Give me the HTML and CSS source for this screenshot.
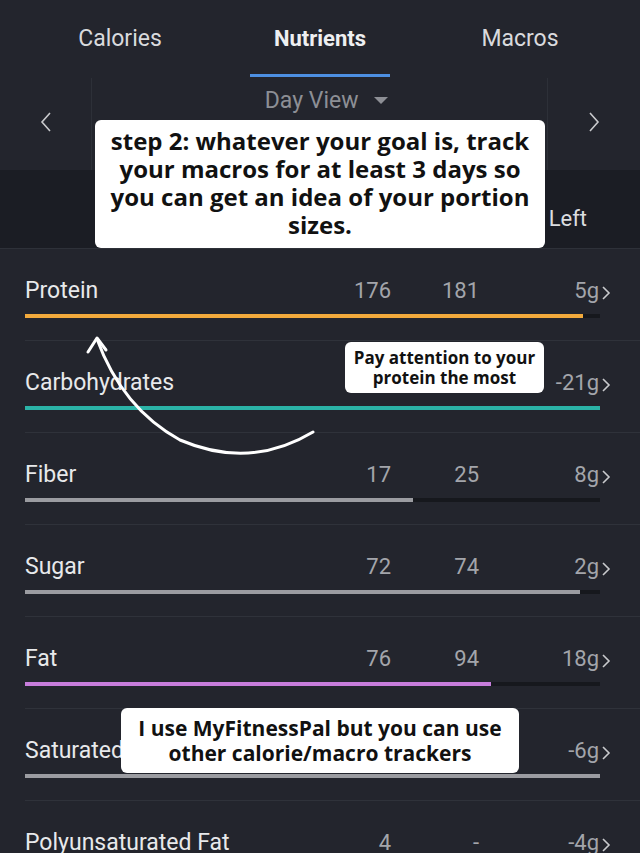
FILE: index.html
```html
<!DOCTYPE html>
<html lang="en">

<head>
    <meta charset="UTF-8">
    <meta name="viewport" content="width=device-width, initial-scale=1.0">
    <title>Nutrients</title>
    <link rel="stylesheet" href="styles.css">
</head>

<body>
    <section class="screen">
        <nav class="tabs">
            <div class="tab"><span>Calories</span></div>
            <div class="tab active"><span>Nutrients</span></div>
            <div class="tab"><span>Macros</span></div>
        </nav>

        <div class="dayview">
            <div class="nav-arrow">
                <svg width="12" height="20" viewBox="0 0 12 20"><path d="M10 1 L2 10 L10 19" /></svg>
            </div>
            <div class="day-center">
                <p class="day-title">Day View <span class="caret"></span></p>
            </div>
            <div class="nav-arrow">
                <svg width="12" height="20" viewBox="0 0 12 20"><path d="M2 1 L10 10 L2 19" /></svg>
            </div>
        </div>

        <div class="head">
            <div class="cols">
                <span></span>
                <span></span>
                <span></span>
                <span class="num left">Left</span>
                <span></span>
            </div>
        </div>

        <div class="row">
            <div class="cols">
                <span class="name">Protein</span>
                <span class="num">176</span>
                <span class="num">181</span>
                <span class="num">5g</span>
                <svg class="chev" width="10" height="16" viewBox="0 0 10 16"><path d="M2 2 L8 8 L2 14" /></svg>
            </div>
            <div class="track"><div class="fill orange" style="width: 97%"></div></div>
        </div>

        <div class="row">
            <div class="cols">
                <span class="name">Carbohydrates</span>
                <span class="num"></span>
                <span class="num"></span>
                <span class="num">-21g</span>
                <svg class="chev" width="10" height="16" viewBox="0 0 10 16"><path d="M2 2 L8 8 L2 14" /></svg>
            </div>
            <div class="track"><div class="fill teal" style="width: 100%"></div></div>
        </div>

        <div class="row">
            <div class="cols">
                <span class="name">Fiber</span>
                <span class="num">17</span>
                <span class="num">25</span>
                <span class="num">8g</span>
                <svg class="chev" width="10" height="16" viewBox="0 0 10 16"><path d="M2 2 L8 8 L2 14" /></svg>
            </div>
            <div class="track"><div class="fill grey" style="width: 67.5%"></div></div>
        </div>

        <div class="row">
            <div class="cols">
                <span class="name">Sugar</span>
                <span class="num">72</span>
                <span class="num">74</span>
                <span class="num">2g</span>
                <svg class="chev" width="10" height="16" viewBox="0 0 10 16"><path d="M2 2 L8 8 L2 14" /></svg>
            </div>
            <div class="track"><div class="fill grey" style="width: 96.5%"></div></div>
        </div>

        <div class="row">
            <div class="cols">
                <span class="name">Fat</span>
                <span class="num">76</span>
                <span class="num">94</span>
                <span class="num">18g</span>
                <svg class="chev" width="10" height="16" viewBox="0 0 10 16"><path d="M2 2 L8 8 L2 14" /></svg>
            </div>
            <div class="track"><div class="fill purple" style="width: 81%"></div></div>
        </div>

        <div class="row">
            <div class="cols">
                <span class="name">Saturated</span>
                <span class="num"></span>
                <span class="num"></span>
                <span class="num">-6g</span>
                <svg class="chev" width="10" height="16" viewBox="0 0 10 16"><path d="M2 2 L8 8 L2 14" /></svg>
            </div>
            <div class="track"><div class="fill grey" style="width: 100%"></div></div>
        </div>

        <div class="row">
            <div class="cols">
                <span class="name">Polyunsaturated Fat</span>
                <span class="num">4</span>
                <span class="num">-</span>
                <span class="num">-4g</span>
                <svg class="chev" width="10" height="16" viewBox="0 0 10 16"><path d="M2 2 L8 8 L2 14" /></svg>
            </div>
            <div class="track"><div class="fill grey" style="width: 0%"></div></div>
        </div>

        <!-- overlays -->
        <svg class="doodle" width="640" height="853" viewBox="0 0 640 853">
            <path d="M313 432 Q250 470 180 440 Q122 408 97 339" />
            <path d="M88 352 L97 338 L106 350" />
        </svg>

        <div class="caption big">step 2: whatever your goal is, track<br>your macros for at least 3 days so<br>you can get an idea of your portion<br>sizes.</div>
        <div class="caption small">Pay attention to your<br>protein the most</div>
        <div class="caption mid">I use MyFitnessPal but you can use<br>other calorie/macro trackers</div>
    </section>
</body>

</html>
```

FILE: styles.css
```css
* {
    margin: 0;
    padding: 0;
    box-sizing: border-box;
}

body {
    font-family: Roboto, "Liberation Sans", sans-serif;
    background-color: #23252d;
    color: #e6e7ea;
}

.screen {
    position: relative;
    width: 640px;
    height: 853px;
    overflow: hidden;
    background-color: #23252d;
}

/* tabs */
.tabs {
    display: grid;
    grid-template-columns: repeat(3, 1fr);
    padding: 0 20px;
    height: 78px;
}

.tab {
    display: flex;
    justify-content: center;
    align-items: flex-end;
    height: 77px;
}

.tab span {
    font-size: 23px;
    line-height: 26px;
    padding: 0 24px 22px;
    border-bottom: 3px solid transparent;
    color: #d9dadd;
}

.tab.active span {
    font-weight: 700;
    font-size: 22px;
    color: #eeeff1;
    border-bottom-color: #4d8fe2;
}

/* day view */
.dayview {
    display: grid;
    grid-template-columns: 91px 1fr 92px;
    height: 92px;
}

.nav-arrow {
    display: flex;
    justify-content: center;
    align-items: center;
    padding-bottom: 4px;
}

.nav-arrow svg path,
.chev path {
    fill: none;
    stroke: #c9cacd;
    stroke-width: 1.6;
}

.day-center {
    border-left: 1px solid #2d3038;
    border-right: 1px solid #2d3038;
    text-align: center;
    padding-top: 10px;
}

.day-title {
    font-size: 23px;
    line-height: 26px;
    color: #8d8f95;
    padding-left: 14px;
}

.caret {
    display: inline-block;
    width: 0;
    height: 0;
    margin-left: 10px;
    vertical-align: 4px;
    border-left: 7px solid transparent;
    border-right: 7px solid transparent;
    border-top: 7px solid #8d8f95;
}

/* table */
.cols {
    display: grid;
    grid-template-columns: 1fr 70px 88px 120px 12px;
    align-items: center;
    font-size: 23px;
    line-height: 24px;
}

.num {
    text-align: right;
    font-size: 22px;
    color: #a3a5ab;
}

.head {
    height: 79px;
    padding: 37px 29px 0 25px;
    background-color: #1b1d24;
    border-bottom: 1px solid #2e3139;
}

.head .num {
    color: #dcdde0;
}

.head .left {
    padding-right: 12px;
}

.row {
    height: 92px;
    margin-left: 25px;
    padding: 30px 29px 0 0;
    border-bottom: 1px solid #2f323a;
}

.name {
    color: #e8e9eb;
}

.chev {
    justify-self: end;
    margin-top: 3px;
}

.track {
    height: 4px;
    margin: 11px 11px 0 0;
    background-color: #16181d;
}

.fill {
    height: 100%;
}

.orange {
    background-color: #f2aa3c;
}

.teal {
    background-color: #2bb3a7;
}

.grey {
    background-color: #9b9ca1;
}

.purple {
    background-color: #c77ddc;
}

/* overlay captions */
.doodle {
    position: absolute;
    top: 0;
    left: 0;
    pointer-events: none;
}

.doodle path {
    fill: none;
    stroke: #ffffff;
    stroke-width: 3;
    stroke-linecap: round;
    stroke-linejoin: round;
}

.caption {
    position: absolute;
    display: flex;
    align-items: center;
    justify-content: center;
    text-align: center;
    background-color: #ffffff;
    color: #111111;
    font-family: "Open Sans", "Noto Sans", sans-serif;
    font-weight: 700;
    border-radius: 6px;
    white-space: nowrap;
}

.caption.big {
    left: 95px;
    top: 120px;
    width: 450px;
    height: 128px;
    font-size: 24px;
    line-height: 28px;
    padding-bottom: 2px;
}

.caption.small {
    left: 345px;
    top: 342px;
    width: 199px;
    height: 51px;
    font-size: 17px;
    line-height: 20px;
}

.caption.mid {
    left: 121px;
    top: 708px;
    width: 398px;
    height: 65px;
    font-size: 21px;
    line-height: 25px;
}
```
